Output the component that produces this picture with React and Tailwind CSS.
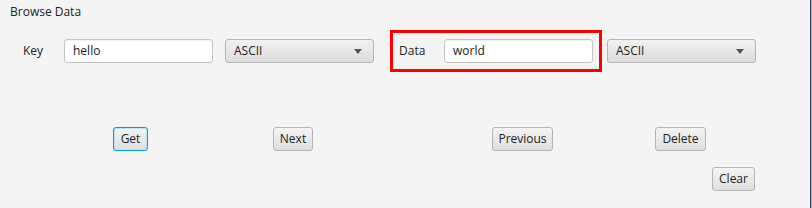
import React from "react";

const font = { fontFamily: '"Open Sans", "Noto Sans", sans-serif' };

const TextField = ({ value }) => (
  <div className="w-[149px] h-[24px] flex items-center pl-[8px] bg-white border border-[#c4c4c4] rounded-[3px] shadow-[inset_0_1px_1px_rgba(0,0,0,0.06)] text-[12px] text-[#222]">
    {value}
  </div>
);

const Combo = ({ value }) => (
  <div className="w-[149px] h-[24px] flex items-center justify-between pl-[8px] pr-[11px] border border-[#b4b4b4] rounded-[3px] bg-gradient-to-b from-[#f2f2f2] to-[#dcdcdc] text-[12px] text-[#222]">
    <span>{value}</span>
    <svg width="8" height="5" viewBox="0 0 8 5">
      <path d="M0 0 L8 0 L4 5 Z" fill="#555" />
    </svg>
  </div>
);

const Button = ({ label, width, focused }) => (
  <div
    className={`h-[24px] flex items-center justify-center rounded-[3px] bg-gradient-to-b from-[#f4f4f4] to-[#dedede] text-[12px] text-[#222] border ${
      focused
        ? "border-[#039ed3] shadow-[inset_0_0_0_1px_#bde6f5]"
        : "border-[#b4b4b4]"
    } ${width}`}
  >
    {label}
  </div>
);

const App = () => {
  return (
    <div className="w-[812px] h-[208px] bg-[#f4f4f4] flex" style={font}>
      <div className="w-[810px] h-full flex flex-col">
        <div className="pl-[10px] pt-[3px] text-[12px] text-[#222] leading-[18px]">Browse Data</div>

        <div className="flex items-center mt-[9px]">
          <span className="ml-[23px] w-[41px] text-[12px] text-[#222]">Key</span>
          <TextField value="hello" />
          <div className="ml-[12px]">
            <Combo value="ASCII" />
          </div>
          <div className="ml-[16px] w-[212px] h-[42px] border-[3px] border-[#ff0000] flex items-center pl-[6px]">
            <span className="w-[45px] text-[12px] text-[#222]">Data</span>
            <TextField value="world" />
          </div>
          <div className="ml-[5px]">
            <Combo value="ASCII" />
          </div>
        </div>

        <div className="flex items-center mt-[55px]">
          <div className="ml-[113px]">
            <Button label="Get" width="w-[35px]" focused />
          </div>
          <div className="ml-[125px]">
            <Button label="Next" width="w-[40px]" />
          </div>
          <div className="ml-[179px]">
            <Button label="Previous" width="w-[61px]" />
          </div>
          <div className="ml-[102px]">
            <Button label="Delete" width="w-[51px]" />
          </div>
        </div>

        <div className="flex items-center mt-[16px]">
          <div className="ml-[712px]">
            <Button label="Clear" width="w-[43px]" />
          </div>
        </div>
      </div>
      <div className="w-[1px] h-full bg-[#2c3a66]" />
      <div className="w-[1px] h-full bg-[#9fb2e4]" />
    </div>
  );
};

export default App;
